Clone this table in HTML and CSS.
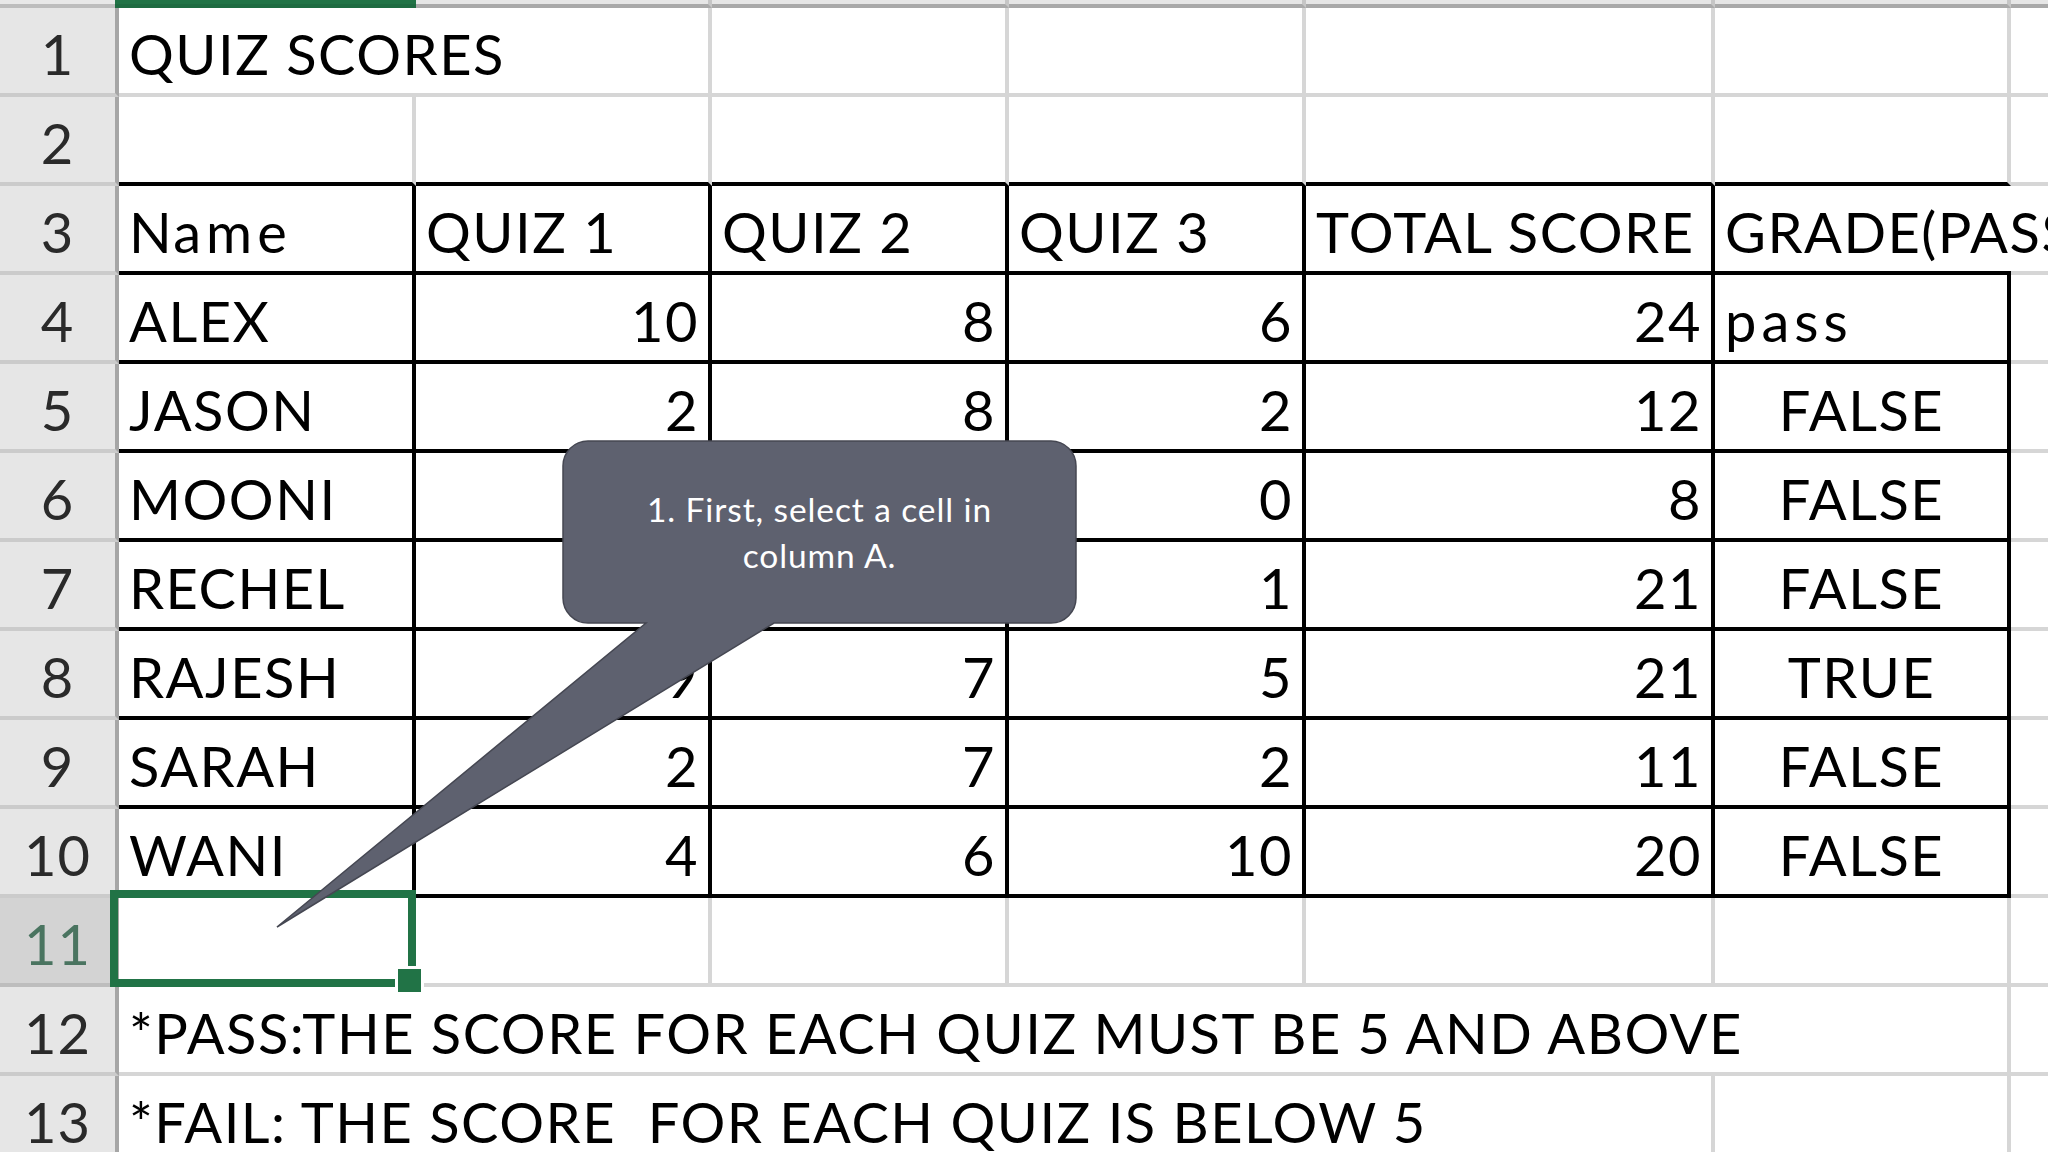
FILE: index.html
```html
<!DOCTYPE html>
<html>
<head>
<meta charset="utf-8">
<link rel="stylesheet" href="styles.css">
</head>
<body>
<div class="page">
  <div class="sheet">
    <div class="ch corner"></div><div class="ch ch-sel"></div><div class="ch"></div><div class="ch"></div><div class="ch"></div><div class="ch"></div><div class="ch"></div><div class="ch"></div>

    <div class="rh">1</div><div class="c span2">QUIZ SCORES</div><div class="c"></div><div class="c"></div><div class="c"></div><div class="c"></div><div class="c"></div>

    <div class="rh">2</div><div class="c bb"></div><div class="c bb"></div><div class="c bb"></div><div class="c bb"></div><div class="c bb"></div><div class="c bb"></div><div class="c"></div>

    <div class="rh">3</div><div class="c bb br"><span>N<span class="lc">ame</span></span></div><div class="c bb br">QUIZ 1</div><div class="c bb br">QUIZ 2</div><div class="c bb br">QUIZ 3</div><div class="c bb br">TOTAL SCORE</div><div class="c bb nor">GRADE(PASS/FAIL)</div><div class="c"></div>

    <div class="rh">4</div><div class="c bb br">ALEX</div><div class="c bb br num">10</div><div class="c bb br num">8</div><div class="c bb br num">6</div><div class="c bb br num">24</div><div class="c bb br"><span class="lc">pass</span></div><div class="c"></div>

    <div class="rh">5</div><div class="c bb br">JASON</div><div class="c bb br num">2</div><div class="c bb br num">8</div><div class="c bb br num">2</div><div class="c bb br num">12</div><div class="c bb br mid">FALSE</div><div class="c"></div>

    <div class="rh">6</div><div class="c bb br">MOONI</div><div class="c bb br num">4</div><div class="c bb br num">4</div><div class="c bb br num">0</div><div class="c bb br num">8</div><div class="c bb br mid">FALSE</div><div class="c"></div>

    <div class="rh">7</div><div class="c bb br">RECHEL</div><div class="c bb br num">10</div><div class="c bb br num">10</div><div class="c bb br num">1</div><div class="c bb br num">21</div><div class="c bb br mid">FALSE</div><div class="c"></div>

    <div class="rh">8</div><div class="c bb br">RAJESH</div><div class="c bb br num">9</div><div class="c bb br num">7</div><div class="c bb br num">5</div><div class="c bb br num">21</div><div class="c bb br mid">TRUE</div><div class="c"></div>

    <div class="rh">9</div><div class="c bb br">SARAH</div><div class="c bb br num">2</div><div class="c bb br num">7</div><div class="c bb br num">2</div><div class="c bb br num">11</div><div class="c bb br mid">FALSE</div><div class="c"></div>

    <div class="rh">10</div><div class="c bb br">WANI</div><div class="c bb br num">4</div><div class="c bb br num">6</div><div class="c bb br num">10</div><div class="c bb br num">20</div><div class="c bb br mid">FALSE</div><div class="c"></div>

    <div class="rh rh-sel">11</div><div class="c selected"><span class="handle"></span></div><div class="c"></div><div class="c"></div><div class="c"></div><div class="c"></div><div class="c"></div><div class="c"></div>

    <div class="rh">12</div><div class="c span6">*PASS:THE SCORE FOR EACH QUIZ MUST BE 5 AND ABOVE</div><div class="c"></div>

    <div class="rh">13</div><div class="c span5 pre">*FAIL: THE SCORE  FOR EACH QUIZ IS BELOW 5</div><div class="c"></div><div class="c"></div>
  </div>

  <svg class="callout-shape" width="2048" height="1152" viewBox="0 0 2048 1152">
    <path d="M588 441 H1051 A25 25 0 0 1 1076 466 V598 A25 25 0 0 1 1051 623 H774 L277 927 L646 623 H588 A25 25 0 0 1 563 598 V466 A25 25 0 0 1 588 441 Z" fill="#5e616f" stroke="#454752" stroke-width="1.5"/>
  </svg>
  <div class="callout-text">1. First, select a cell in<br>column A.</div>
</div>
</body>
</html>
```
FILE: styles.css
```css
html, body {
  margin: 0;
  padding: 0;
  background: #ffffff;
}

.page {
  position: relative;
  width: 2048px;
  height: 1152px;
  overflow: hidden;
  font-family: Lato, "Liberation Sans", sans-serif;
}

.sheet {
  display: grid;
  grid-template-columns: 119px 297px 296px 297px 297px 409px 296px 400px;
  grid-template-rows: 8px repeat(13, 89px);
  width: 2048px;
  height: 1152px;
  overflow: hidden;
  background: #ffffff;
}

/* column header strip */
.ch {
  box-sizing: border-box;
  background: #e6e6e6;
  border-bottom: 4px solid #a9a9a9;
  border-right: 4px solid #c6c6c6;
}
.ch.corner {
  background: #e8e8e8;
  border-bottom: 4px solid #bdbdbd;
  border-right: 4px solid #a6a6a6;
}
.ch.ch-sel {
  background: #217346;
  border-bottom: 4px solid #1e6b41;
  border-right: none;
  margin-left: -4px;
}

/* row headers */
.rh {
  box-sizing: border-box;
  background: #e6e6e6;
  border-right: 4px solid #a6a6a6;
  border-bottom: 4px solid #cbcbcb;
  display: flex;
  align-items: flex-end;
  justify-content: center;
  padding: 0 0 6px 0;
  font-size: 56px;
  line-height: 67px;
  letter-spacing: 1px;
  color: #2a2a2a;
}
.rh.rh-sel {
  background: #d3d3d3;
  border-bottom-color: #bdbdbd;
  color: #4a7460;
}

/* cells */
.c {
  box-sizing: border-box;
  border-right: 4px solid #d6d6d6;
  border-bottom: 4px solid #d6d6d6;
  display: flex;
  align-items: flex-end;
  padding: 0 9px 6px 10px;
  font-size: 56px;
  line-height: 67px;
  letter-spacing: 1.5px;
  color: #000000;
  white-space: nowrap;
  min-width: 0;
}
.c .lc { letter-spacing: 5px; }
.c.bb { border-bottom-color: #000000; }
.c.br { border-right-color: #000000; }
.c.nor { border-right: none; overflow: visible; }
.c.num { justify-content: flex-end; }
.c.mid { justify-content: center; }
.c.pre { white-space: pre; }
.c.span2 { grid-column: span 2; }
.c.span5 { grid-column: span 5; }
.c.span6 { grid-column: span 6; }

/* selected cell A11 */
.c.selected {
  position: relative;
  border-color: transparent;
}
.c.selected::before {
  content: "";
  position: absolute;
  left: -9px;
  top: -8px;
  right: -4px;
  bottom: -4px;
  border: 8px solid #217346;
}
.handle {
  position: absolute;
  right: -9px;
  bottom: -9px;
  width: 23px;
  height: 23px;
  background: #217346;
  box-shadow: 0 0 0 3px #ffffff;
}

/* callout */
.callout-shape {
  position: absolute;
  left: 0;
  top: 0;
  pointer-events: none;
}
.callout-text {
  position: absolute;
  left: 563px;
  top: 441px;
  width: 513px;
  height: 182px;
  box-sizing: border-box;
  padding-top: 45px;
  text-align: center;
  color: #ffffff;
  font-size: 33.5px;
  line-height: 46px;
  letter-spacing: 0.9px;
}
```
